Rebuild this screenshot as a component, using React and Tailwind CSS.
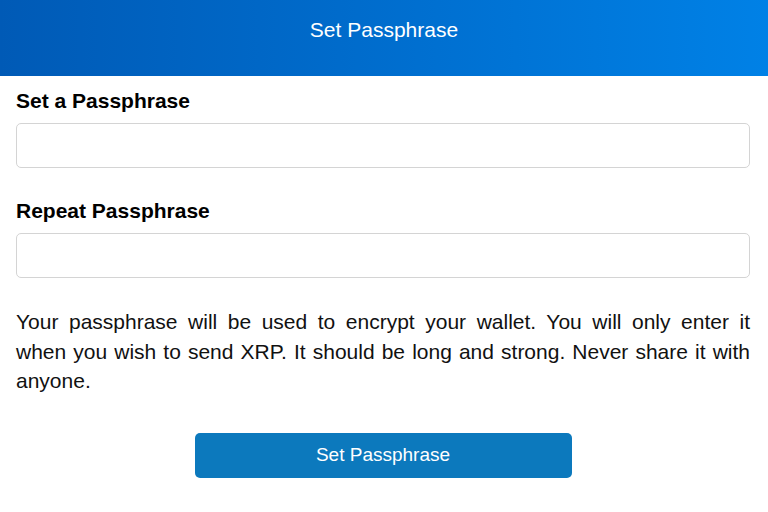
import React from "react";

function Field({ label }) {
  return (
    <div className="flex flex-col">
      <label className="text-[21px] font-bold text-black leading-[24px]">
        {label}
      </label>
      <input
        type="password"
        className="mt-[10px] h-[45px] w-full rounded-[5px] border border-[#d4d4d4] bg-white px-3 outline-none"
      />
    </div>
  );
}

export default function App() {
  return (
    <div
      className="w-full min-h-[512px] bg-white"
      style={{ fontFamily: "'Liberation Sans', Arial, sans-serif" }}
    >
      <header className="h-[76px] flex items-center justify-center bg-gradient-to-r from-[#005ab6] to-[#0081e6] pb-[16px]">
        <h1 className="text-white text-[21px] font-normal">Set Passphrase</h1>
      </header>
      <div className="pl-4 pr-[18px] pt-[13px]">
        <Field label="Set a Passphrase" />
        <div className="mt-[31px]">
          <Field label="Repeat Passphrase" />
        </div>
        <div className="mt-[29px] text-[21px] leading-[29.5px] text-justify text-[#111]">
          <p className="[text-align-last:justify]">
            Your passphrase will be used to encrypt your wallet. You will only
            enter it
          </p>
          <p>
            when you wish to send XRP. It should be long and strong. Never
            share it with anyone.
          </p>
        </div>
        <div className="flex justify-center mt-[37px]">
          <button className="w-[377px] h-[45px] rounded-[5px] bg-[#0c79bd] text-white text-[19px]">
            Set Passphrase
          </button>
        </div>
      </div>
    </div>
  );
}
